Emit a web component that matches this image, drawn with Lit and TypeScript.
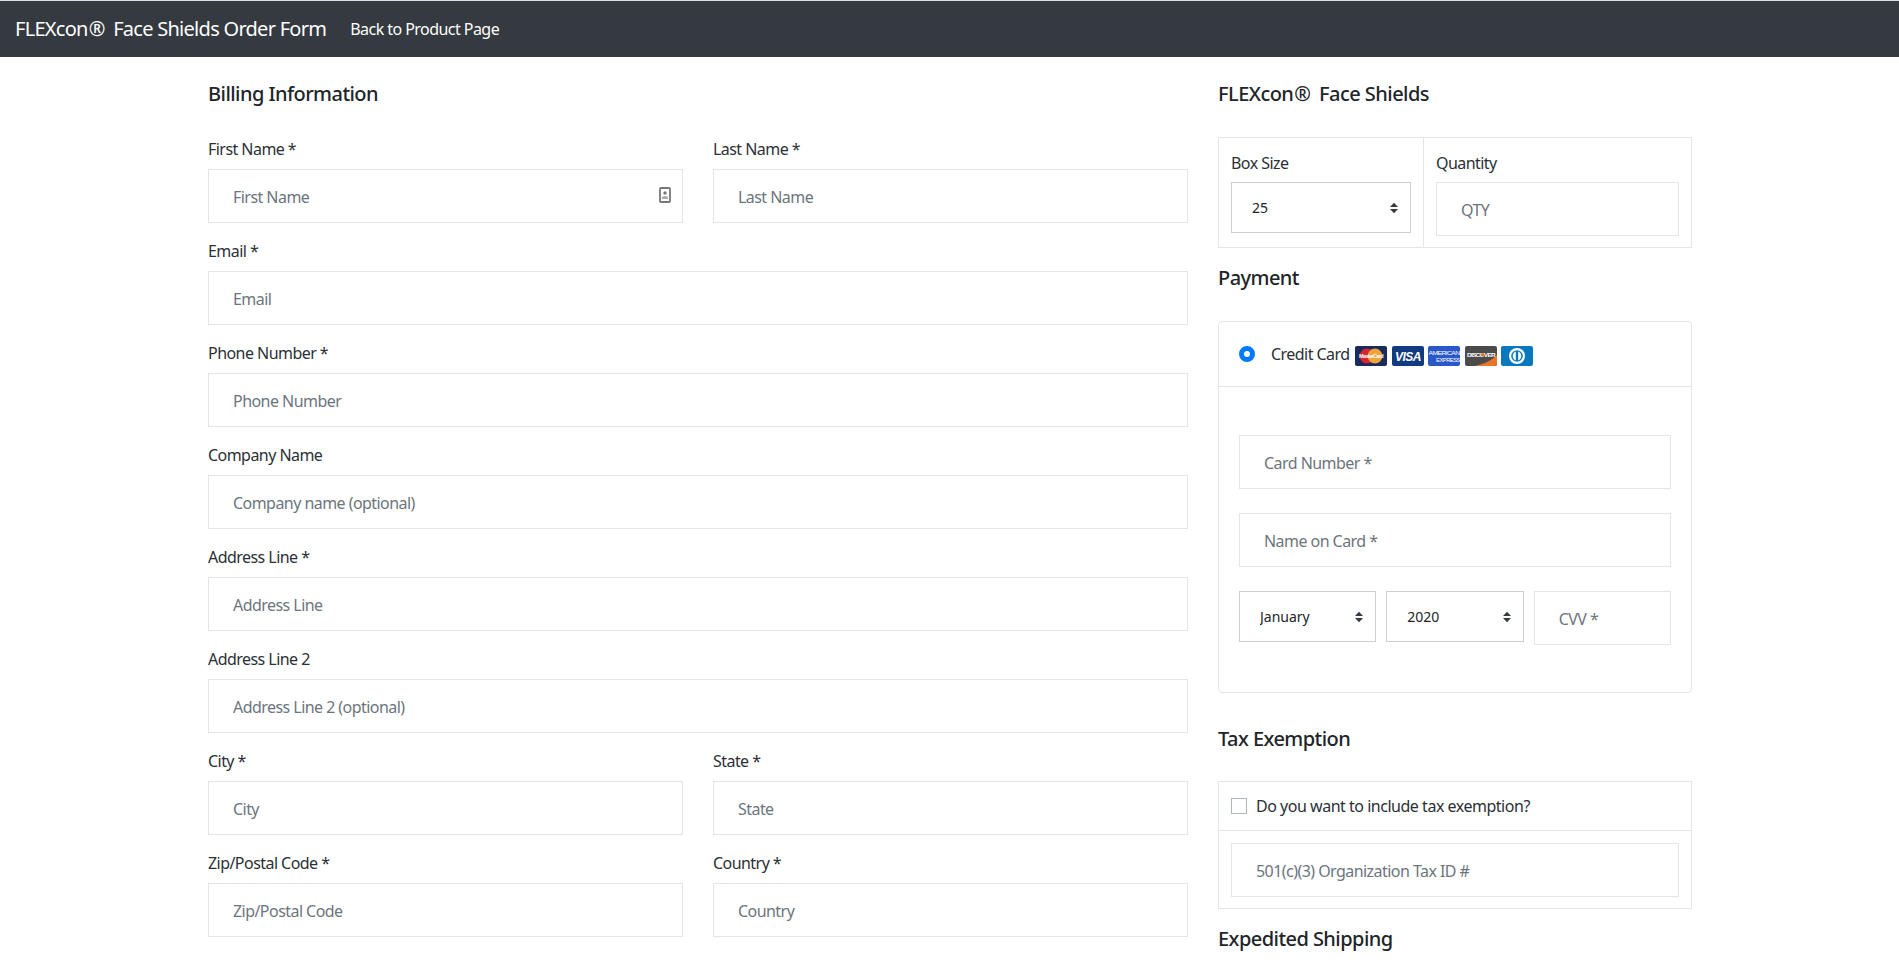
import { LitElement, html, css, svg } from "lit";
import { customElement } from "lit/decorators.js";

const arrows = html`<svg class="arrows" width="8" height="12" viewBox="0 0 8 12"><path d="M4 .8 L8 5 H0 Z M4 11.2 L0 7 H8 Z" fill="#343a40"/></svg>`;

const mc = svg`<rect width="32" height="20" rx="2" fill="#1b2a5c"/><circle cx="12" cy="10" r="7.4" fill="#d5262f"/><circle cx="20" cy="10" r="7.4" fill="#eea43a"/><text x="16" y="11.6" text-anchor="middle" font-size="4.6" font-weight="700" fill="#fff" textLength="24" lengthAdjust="spacingAndGlyphs" font-family="Liberation Sans, sans-serif">MasterCard</text>`;
const visa = svg`<rect width="32" height="20" rx="2" fill="#123a80"/><text x="16" y="14.6" text-anchor="middle" font-size="12" font-weight="700" font-style="italic" fill="#fff" font-family="Liberation Sans, sans-serif">VISA</text>`;
const amex = svg`<rect width="32" height="20" rx="2" fill="#2a58c8"/><text x="16" y="8.6" text-anchor="middle" font-size="6" fill="#fff" textLength="31" lengthAdjust="spacingAndGlyphs" font-family="Liberation Sans, sans-serif">AMERICAN</text><text x="20" y="15.6" text-anchor="middle" font-size="6" fill="#fff" textLength="24" lengthAdjust="spacingAndGlyphs" font-family="Liberation Sans, sans-serif">EXPRESS</text>`;
const disc = svg`<rect width="32" height="20" rx="2" fill="#4b4b4b"/><path d="M10 20 Q24 17 32 9 V18 a2 2 0 0 1 -2 2 Z" fill="#e8762a"/><text x="16" y="10.5" text-anchor="middle" font-size="5" font-weight="700" fill="#fff" textLength="28" lengthAdjust="spacingAndGlyphs" font-family="Liberation Sans, sans-serif">DISCOVER</text><circle cx="17.8" cy="8.8" r="1.8" fill="#e8762a"/>`;
const diners = svg`<rect width="32" height="20" rx="2" fill="#0a78bd"/><circle cx="16" cy="10" r="8" fill="#fff"/><circle cx="16" cy="10" r="5.8" fill="#0a78bd"/><path d="M14.8 5.4 a5 5 0 0 0 0 9.2 Z M17.2 5.4 a5 5 0 0 1 0 9.2 Z" fill="#fff"/>`;

@customElement("app-root")
export class AppRoot extends LitElement {
  static styles = css`
    :host { display: block; font-family: "Noto Sans", sans-serif; font-size: 16px; line-height: 24px; color: #2b3036; background: #fff; letter-spacing: -0.55px; }
    * { box-sizing: border-box; }
    .nav { height: 57px; background: #343a40; border-top: 1px solid #dee2e6; display: flex; align-items: center; padding-left: 15px; color: #fff; }
    .brand { font-size: 20px; margin-right: 24px; letter-spacing: -0.72px; }
    .reg { margin: 0 4px 0 1px; }
    .back { font-size: 16px; }
    .wrap { display: grid; grid-template-columns: 980px 474px; gap: 30px; padding: 24px 0 0 208px; }
    h4 { margin: 0; font-size: 20px; line-height: 24px; font-weight: 500; color: #212529; position: relative; top: 1px; }
    .mb32 { margin-bottom: 32px; }
    .two { display: grid; grid-template-columns: 475px 475px; gap: 30px; }
    .group { margin-bottom: 16px; position: relative; }
    label { display: block; margin-bottom: 8px; }
    input.text { display: block; width: 100%; height: 54px; border: 1px solid #e5e5e5; padding: 2px 24px 0; font: inherit; letter-spacing: inherit; color: #495057; background: #fff; outline: none; }
    input.text::placeholder { color: #6c757d; opacity: 1; }
    .id { position: absolute; right: 12px; top: 50%; margin-top: -9px; }
    .box { display: grid; grid-template-columns: 204px 1fr; border: 1px solid #e5e5e5; margin-top: 32px; height: 111px; }
    .box > div { padding: 13px 12px 0; }
    .box > div + div { border-left: 1px solid #e5e5e5; }
    .box label { margin-bottom: 7px; }
    .sel { position: relative; }
    .sel select { display: block; width: 100%; height: 51px; appearance: none; border: 1px solid #cfcfcf; border-radius: 0; background: #fff; font: inherit; font-size: 14px; letter-spacing: 0; color: #212529; padding: 0 20px; outline: none; }
    .arrows { position: absolute; right: 13px; top: 50%; margin-top: -6px; pointer-events: none; }
    .h-pay { margin-top: 17px; }
    .card { margin-top: 32px; border: 1px solid #e5e5e5; border-radius: 4px; height: 372px; }
    .card-head { height: 65px; border-bottom: 1px solid #e5e5e5; display: flex; align-items: center; padding-left: 20px; }
    .radio { width: 16px; height: 16px; border-radius: 50%; background: #fff; border: 5px solid #007bff; margin-right: 16px; flex: none; }
    .cc { width: 84px; flex: none; white-space: nowrap; }
    .icons { display: flex; gap: 4.5px; margin-top: 3px; }
    .icons svg { display: block; }
    .card-body { padding: 48px 20px 0; display: flex; flex-direction: column; gap: 24px; }
    .triple { display: grid; grid-template-columns: 1fr 1fr 1fr; gap: 10px; align-items: start; }
    .h-tax { margin-top: 33px; }
    .tax { margin-top: 31px; border: 1px solid #e5e5e5; height: 128px; }
    .tax-top { height: 49px; display: flex; align-items: center; padding-left: 12px; border-bottom: 1px solid #e5e5e5; letter-spacing: -0.48px; }
    .check { width: 16px; height: 16px; border: 1px solid #adb5bd; margin-right: 9px; flex: none; }
    .tax-bottom { padding: 12px; }
    .h-ship { margin-top: 17px; }
  `;

  private field(lbl: string, ph: string, extra: unknown = null) {
    return html`<div class="group"><label>${lbl}</label><div class="sel"><input class="text" placeholder=${ph} />${extra}</div></div>`;
  }

  private icon() {
    return html`<svg class="id" width="12" height="16" viewBox="0 0 12 16"><rect x="1" y="1" width="10" height="14" rx="1" fill="none" stroke="#777" stroke-width="1.8"/><circle cx="6" cy="6" r="1.7" fill="#777"/><path d="M3 12 V10.6 Q3 9 6 9 T9 10.6 V12 Z" fill="#aaa"/></svg>`;
  }

  render() {
    return html`
      <div class="nav"><span class="brand">FLEXcon<span class="reg">®</span> Face Shields Order Form</span><span class="back">Back to Product Page</span></div>
      <div class="wrap">
        <div>
          <h4 class="mb32">Billing Information</h4>
          <div class="two">
            ${this.field("First Name *", "First Name", this.icon())}
            ${this.field("Last Name *", "Last Name")}
          </div>
          ${this.field("Email *", "Email")}
          ${this.field("Phone Number *", "Phone Number")}
          ${this.field("Company Name", "Company name (optional)")}
          ${this.field("Address Line *", "Address Line")}
          ${this.field("Address Line 2", "Address Line 2 (optional)")}
          <div class="two">
            ${this.field("City *", "City")}
            ${this.field("State *", "State")}
          </div>
          <div class="two">
            ${this.field("Zip/Postal Code *", "Zip/Postal Code")}
            ${this.field("Country *", "Country")}
          </div>
        </div>
        <div>
          <h4>FLEXcon<span class="reg">®</span> Face Shields</h4>
          <div class="box">
            <div>
              <label>Box Size</label>
              <div class="sel"><select><option>25</option></select>${arrows}</div>
            </div>
            <div>
              <label>Quantity</label>
              <input class="text" placeholder="QTY" />
            </div>
          </div>
          <h4 class="h-pay">Payment</h4>
          <div class="card">
            <div class="card-head">
              <span class="radio"></span>
              <span class="cc">Credit Card</span>
              <span class="icons">
                <svg width="32" height="20">${mc}</svg>
                <svg width="32" height="20">${visa}</svg>
                <svg width="32" height="20">${amex}</svg>
                <svg width="32" height="20">${disc}</svg>
                <svg width="32" height="20">${diners}</svg>
              </span>
            </div>
            <div class="card-body">
              <input class="text" placeholder="Card Number *" />
              <input class="text" placeholder="Name on Card *" />
              <div class="triple">
                <div class="sel"><select><option>January</option></select>${arrows}</div>
                <div class="sel"><select><option>2020</option></select>${arrows}</div>
                <input class="text" placeholder="CVV *" />
              </div>
            </div>
          </div>
          <h4 class="h-tax">Tax Exemption</h4>
          <div class="tax">
            <div class="tax-top"><span class="check"></span><span>Do you want to include tax exemption?</span></div>
            <div class="tax-bottom"><input class="text" placeholder="501(c)(3) Organization Tax ID #" /></div>
          </div>
          <h4 class="h-ship">Expedited Shipping</h4>
        </div>
      </div>
    `;
  }
}
